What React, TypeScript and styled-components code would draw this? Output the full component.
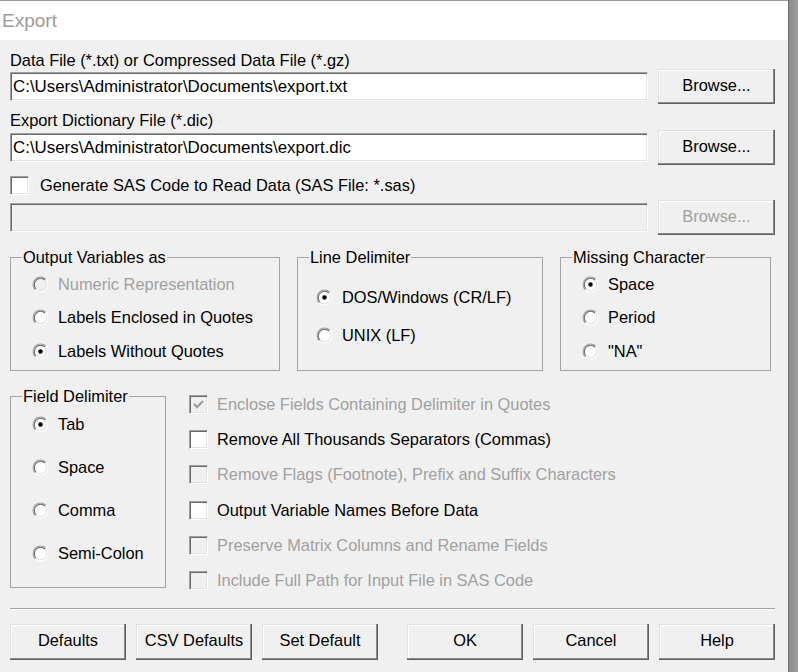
import React from "react";
import styled, { createGlobalStyle } from "styled-components";

const GlobalStyle = createGlobalStyle`
  html, body {
    margin: 0;
    padding: 0;
    background: #fff;
  }
  body {
    font-family: "Liberation Sans", Arial, sans-serif;
    font-size: 16.4px;
    color: #000;
  }
`;

const Window = styled.div`
  display: flex;
  width: 798px;
  height: 672px;
  overflow: hidden;
`;

const Main = styled.div`
  flex: 1;
  display: flex;
  flex-direction: column;
  border-top: 1px solid #9a9a9a;
`;

const TitleBar = styled.div`
  height: 39px;
  display: flex;
  align-items: center;
  padding-left: 2px;
  background: #fff;
  font-size: 19px;
  color: #a19b96;
`;

const Edge = styled.div`
  width: 10px;
  background: linear-gradient(to right, #6e6e6e 0, #6e6e6e 1px, #8c8c8c 1px, #9c9c9c 100%);
`;

const Body = styled.div`
  flex: 1;
  display: flex;
  flex-direction: column;
  padding: 0 13px 0 10px;
  background: #f0f0f0;
`;

const FieldLabel = styled.div<{ $top: number }>`
  margin-top: ${(p) => p.$top}px;
  height: 18px;
  line-height: 18px;
  white-space: nowrap;
`;

const FileRow = styled.div<{ $top: number }>`
  display: flex;
  align-items: center;
  gap: 10px;
  height: 35px;
  margin-top: ${(p) => p.$top}px;
`;

const PathInput = styled.input`
  flex: 1;
  height: 29px;
  box-sizing: border-box;
  margin: 0;
  padding: 0 2px;
  border: 1px solid;
  border-color: #a0a0a0 #fff #fff #a0a0a0;
  box-shadow: inset 1px 1px #696969, inset -1px -1px #e3e3e3;
  background: ${(p) => (p.disabled ? "#f0f0f0" : "#fff")};
  font-family: inherit;
  font-size: 16.9px;
  color: #000;
  outline: none;
`;

const WinButton = styled.button<{ $w: number; $h: number }>`
  width: ${(p) => p.$w}px;
  height: ${(p) => p.$h}px;
  flex: none;
  margin: 0;
  padding: 0 0 2px 0;
  border: none;
  background: #f0f0f0;
  box-shadow: inset -1px -1px #5f5f5f, inset -2px -2px #8a8a8a, inset 1px 1px #e3e3e3,
    inset 2px 2px #fff;
  font-family: inherit;
  font-size: 16.4px;
  color: ${(p) => (p.disabled ? "#a0a0a0" : "#000")};
`;

const CheckRow = styled.label<{ $top?: number; $gap: number; $disabled?: boolean }>`
  display: flex;
  align-items: center;
  gap: ${(p) => p.$gap}px;
  height: 20px;
  margin-top: ${(p) => p.$top ?? 0}px;
  white-space: nowrap;
  color: ${(p) => (p.$disabled ? "#a0a0a0" : "#000")};
`;

const Box = styled.span<{ $disabled?: boolean }>`
  width: 19px;
  height: 19px;
  box-sizing: border-box;
  flex: none;
  display: flex;
  align-items: center;
  justify-content: center;
  border: 1px solid;
  border-color: #a0a0a0 #fff #fff #a0a0a0;
  box-shadow: inset 1px 1px #696969, inset -1px -1px #e3e3e3;
  background: ${(p) => (p.$disabled ? "#f0f0f0" : "#fff")};
`;

const GroupsRow = styled.div`
  display: flex;
  gap: 17px;
  height: 123px;
  margin-top: 13px;
`;

const Group = styled.fieldset<{ $w: number }>`
  width: ${(p) => p.$w}px;
  box-sizing: border-box;
  margin: 0;
  padding: 0;
  min-width: 0;
  border: 1px solid #a3a3a3;
`;

const Legend = styled.legend`
  margin-left: 11px;
  padding: 0 1px;
  line-height: 18px;
  font-size: 16.4px;
`;

const RadioList = styled.div<{ $top: number; $left: number; $gap: number }>`
  display: flex;
  flex-direction: column;
  gap: ${(p) => p.$gap}px;
  padding: ${(p) => p.$top}px 0 0 ${(p) => p.$left}px;
`;

const RadioRow = styled.label<{ $disabled?: boolean }>`
  display: flex;
  align-items: center;
  gap: 9px;
  height: 20px;
  white-space: nowrap;
  color: ${(p) => (p.$disabled ? "#a0a0a0" : "#000")};
`;

const LowerRow = styled.div`
  display: flex;
  align-items: flex-start;
  margin-top: 16px;
`;

const FieldGroup = styled(Group)`
  height: 201px;
`;

const CheckList = styled.div`
  display: flex;
  flex-direction: column;
  gap: 15.4px;
  margin-left: 23px;
  padding-top: 7px;
`;

const Separator = styled.div`
  height: 0;
  margin-top: 17px;
  border-top: 1px solid #a0a0a0;
  border-bottom: 1px solid #fff;
`;

const ButtonBar = styled.div`
  display: flex;
  gap: 10px;
  margin-top: 14px;
`;

const Spacer = styled.div`
  flex: 1;
`;

const Radio = ({ checked, disabled }: { checked?: boolean; disabled?: boolean }) => (
  <svg width="17" height="17" viewBox="0 0 16 16" style={{ flex: "none" }}>
    <circle cx="8" cy="8" r="6" fill={disabled ? "#f0f0f0" : "#fff"} />
    <path d="M3.05 12.95 A7 7 0 0 1 12.95 3.05" fill="none" stroke="#a0a0a0" />
    <path d="M12.95 3.05 A7 7 0 0 1 3.05 12.95" fill="none" stroke="#fff" />
    <path d="M3.76 12.24 A6 6 0 0 1 12.24 3.76" fill="none" stroke="#696969" />
    <path d="M12.24 3.76 A6 6 0 0 1 3.76 12.24" fill="none" stroke="#e3e3e3" />
    {checked && <circle cx="8" cy="8" r="2.1" fill={disabled ? "#a0a0a0" : "#000"} />}
  </svg>
);

const Check = ({ checked, disabled }: { checked?: boolean; disabled?: boolean }) => (
  <Box $disabled={disabled}>
    {checked && (
      <svg width="13" height="13" viewBox="0 0 13 13">
        <path d="M2 6 L5 9 L11 3" fill="none" stroke={disabled ? "#a0a0a0" : "#000"} strokeWidth="2.4" />
      </svg>
    )}
  </Box>
);

type Opt = { label: string; checked?: boolean; disabled?: boolean };

const RadioItems = ({ items }: { items: Opt[] }) => (
  <>
    {items.map((o) => (
      <RadioRow key={o.label} $disabled={o.disabled}>
        <Radio checked={o.checked} disabled={o.disabled} />
        {o.label}
      </RadioRow>
    ))}
  </>
);

const outputVars: Opt[] = [
  { label: "Numeric Representation", disabled: true },
  { label: "Labels Enclosed in Quotes" },
  { label: "Labels Without Quotes", checked: true },
];
const lineDelims: Opt[] = [{ label: "DOS/Windows (CR/LF)", checked: true }, { label: "UNIX (LF)" }];
const missingChars: Opt[] = [{ label: "Space", checked: true }, { label: "Period" }, { label: '"NA"' }];
const fieldDelims: Opt[] = [
  { label: "Tab", checked: true },
  { label: "Space" },
  { label: "Comma" },
  { label: "Semi-Colon" },
];
const options: Opt[] = [
  { label: "Enclose Fields Containing Delimiter in Quotes", checked: true, disabled: true },
  { label: "Remove All Thousands Separators (Commas)" },
  { label: "Remove Flags (Footnote), Prefix and Suffix Characters", disabled: true },
  { label: "Output Variable Names Before Data" },
  { label: "Preserve Matrix Columns and Rename Fields", disabled: true },
  { label: "Include Full Path for Input File in SAS Code", disabled: true },
];

export default function App() {
  return (
    <>
      <GlobalStyle />
      <Window>
        <Main>
          <TitleBar>Export</TitleBar>
          <Body>
            <FieldLabel $top={11}>Data File (*.txt) or Compressed Data File (*.gz)</FieldLabel>
            <FileRow $top={0}>
              <PathInput readOnly value="C:\Users\Administrator\Documents\export.txt" />
              <WinButton $w={117} $h={35}>Browse...</WinButton>
            </FileRow>
            <FieldLabel $top={7}>Export Dictionary File (*.dic)</FieldLabel>
            <FileRow $top={1}>
              <PathInput readOnly value="C:\Users\Administrator\Documents\export.dic" />
              <WinButton $w={117} $h={35}>Browse...</WinButton>
            </FileRow>
            <CheckRow $top={10} $gap={11}>
              <Check />
              Generate SAS Code to Read Data (SAS File: *.sas)
            </CheckRow>
            <FileRow $top={5}>
              <PathInput readOnly disabled value="" />
              <WinButton $w={117} $h={35} disabled>
                Browse...
              </WinButton>
            </FileRow>

            <GroupsRow>
              <Group $w={270}>
                <Legend>Output Variables as</Legend>
                <RadioList $top={8} $left={21} $gap={13.5}>
                  <RadioItems items={outputVars} />
                </RadioList>
              </Group>
              <Group $w={246}>
                <Legend>Line Delimiter</Legend>
                <RadioList $top={21} $left={18} $gap={18}>
                  <RadioItems items={lineDelims} />
                </RadioList>
              </Group>
              <Group $w={211}>
                <Legend>Missing Character</Legend>
                <RadioList $top={8} $left={21} $gap={13.5}>
                  <RadioItems items={missingChars} />
                </RadioList>
              </Group>
            </GroupsRow>

            <LowerRow>
              <FieldGroup $w={156}>
                <Legend>Field Delimiter</Legend>
                <RadioList $top={9} $left={21} $gap={23.3}>
                  <RadioItems items={fieldDelims} />
                </RadioList>
              </FieldGroup>
              <CheckList>
                {options.map((o) => (
                  <CheckRow key={o.label} $gap={9} $disabled={o.disabled}>
                    <Check checked={o.checked} disabled={o.disabled} />
                    {o.label}
                  </CheckRow>
                ))}
              </CheckList>
            </LowerRow>

            <Separator />

            <ButtonBar>
              <WinButton $w={116} $h={36}>Defaults</WinButton>
              <WinButton $w={116} $h={36}>CSV Defaults</WinButton>
              <WinButton $w={116} $h={36}>Set Default</WinButton>
              <Spacer />
              <WinButton $w={116} $h={36}>OK</WinButton>
              <WinButton $w={116} $h={36}>Cancel</WinButton>
              <WinButton $w={116} $h={36}>Help</WinButton>
            </ButtonBar>
          </Body>
        </Main>
        <Edge />
      </Window>
    </>
  );
}
